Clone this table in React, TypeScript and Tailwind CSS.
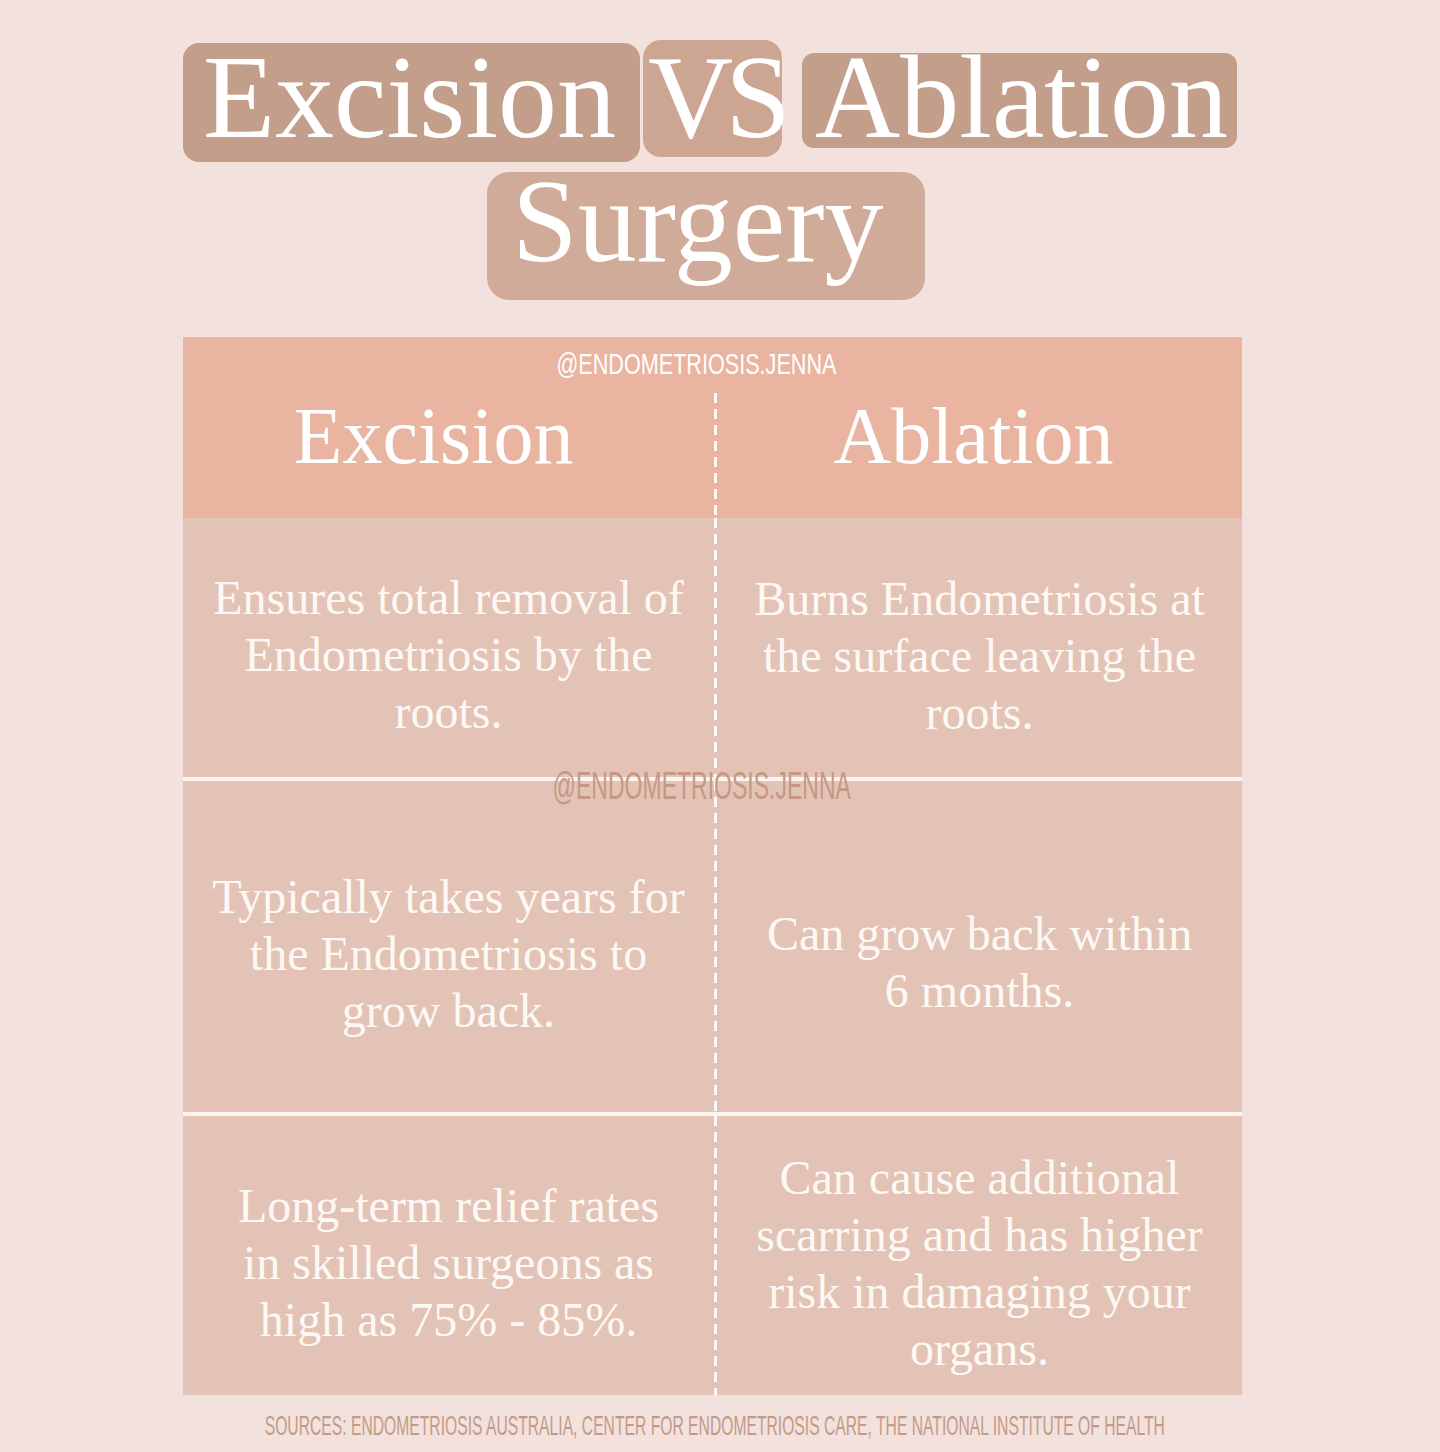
const serif = "font-['Liberation_Serif','Times_New_Roman',serif]";
const hand = "font-['Liberation_Sans',Arial,sans-serif]";

const rows = [
  {
    h: "h-[259px]",
    left: ["Ensures total removal of", "Endometriosis by the", "roots."],
    right: ["Burns Endometriosis at", "the surface leaving the", "roots."],
    rightPad: "pt-[16px]",
  },
  {
    h: "h-[331px]",
    left: ["Typically takes years for", "the Endometriosis to", "grow back."],
    right: ["Can grow back within", "6 months."],
    rightPad: "pt-[30px]",
  },
  {
    h: "h-[279px]",
    left: ["Long-term relief rates", "in skilled surgeons as", "high as 75% - 85%."],
    right: ["Can cause additional", "scarring and has higher", "risk in damaging your", "organs."],
    rightPad: "pt-[14px]",
  },
];

function Dashes() {
  return (
    <div className="w-[3px] shrink-0 self-stretch bg-[repeating-linear-gradient(to_bottom,#fffaf7_0px,#fffaf7_10px,transparent_10px,transparent_16px)]" />
  );
}

function Cell({ lines, className }: { lines: string[]; className: string }) {
  return (
    <div className={`flex items-center justify-center ${className}`}>
      <p className={`${serif} text-center text-[48px] leading-[57px] text-[#fef8f5] whitespace-nowrap`}>
        {lines.map((l, i) => (
          <span key={i} className="block">
            {l}
          </span>
        ))}
      </p>
    </div>
  );
}

export default function App() {
  return (
    <div className="min-h-[1452px] w-full overflow-hidden bg-[#f2e1dc] flex flex-col">
      {/* Title */}
      <div className={`ml-[183px] w-[1059px] pt-[40px] ${serif} text-white text-[118px] leading-[90px]`}>
        <div className="flex items-start">
          <div className="mt-[3px] w-[457px] h-[119px] pl-[20px] pt-[10px] rounded-[16px] bg-[#c29e8b]">Excision</div>
          <div className="ml-[3px] w-[139px] h-[117px] pl-[5px] pt-[13px] rounded-[18px] bg-[#cca593] tracking-[-8px]">VS</div>
          <div className="ml-[20px] mt-[13px] w-[435px] h-[95px] pl-[13px] rounded-[12px] bg-[#c29e8b]">Ablation</div>
        </div>
        <div className="flex">
          <div className="ml-[304px] mt-[10px] w-[438px] h-[128px] pl-[25px] pt-[5px] rounded-[22px] bg-[#d1ab99]">Surgery</div>
        </div>
      </div>

      {/* Table */}
      <div className="relative ml-[183px] mt-[37px] w-[1059px] flex flex-col">
        <div className="h-[181px] bg-[#e9b4a0] flex flex-col">
          <div className="h-[56px] pt-[12px] flex justify-center pr-[32px]">
            <span className={`${hand} text-[30px] leading-none text-white scale-x-[0.72] whitespace-nowrap`}>
              @ENDOMETRIOSIS.JENNA
            </span>
          </div>
          <div className="flex flex-1">
            <div className={`w-[531px] pr-[30px] pt-[3px] text-center ${serif} text-[80px] leading-none text-white`}>
              Excision
            </div>
            <Dashes />
            <div className={`flex-1 pr-[12px] pt-[3px] text-center ${serif} text-[80px] leading-none text-white`}>
              Ablation
            </div>
          </div>
        </div>

        {rows.map((r, i) => (
          <div key={i} className="flex flex-col">
            {i > 0 && <div className="h-[4px] bg-[#fbf4f0]" />}
            <div className={`flex bg-[#e2c3b6] ${r.h}`}>
              <Cell lines={r.left} className="w-[531px] pt-[14px]" />
              <Dashes />
              <Cell lines={r.right} className={`flex-1 ${r.rightPad}`} />
            </div>
          </div>
        ))}

        <div className="absolute left-0 right-0 top-[429px] flex justify-center pr-[21px]">
          <span className={`${hand} text-[39px] leading-none text-[#c69883] scale-x-[0.59] whitespace-nowrap`}>
            @ENDOMETRIOSIS.JENNA
          </span>
        </div>
      </div>

      {/* Sources */}
      <div className="mt-[17px] w-full flex justify-center pr-[10px]">
        <span className={`${hand} text-[28px] leading-none text-[#c29b88] scale-x-[0.56] whitespace-nowrap`}>
          SOURCES: ENDOMETRIOSIS AUSTRALIA, CENTER FOR ENDOMETRIOSIS CARE, THE NATIONAL INSTITUTE OF HEALTH
        </span>
      </div>
    </div>
  );
}
